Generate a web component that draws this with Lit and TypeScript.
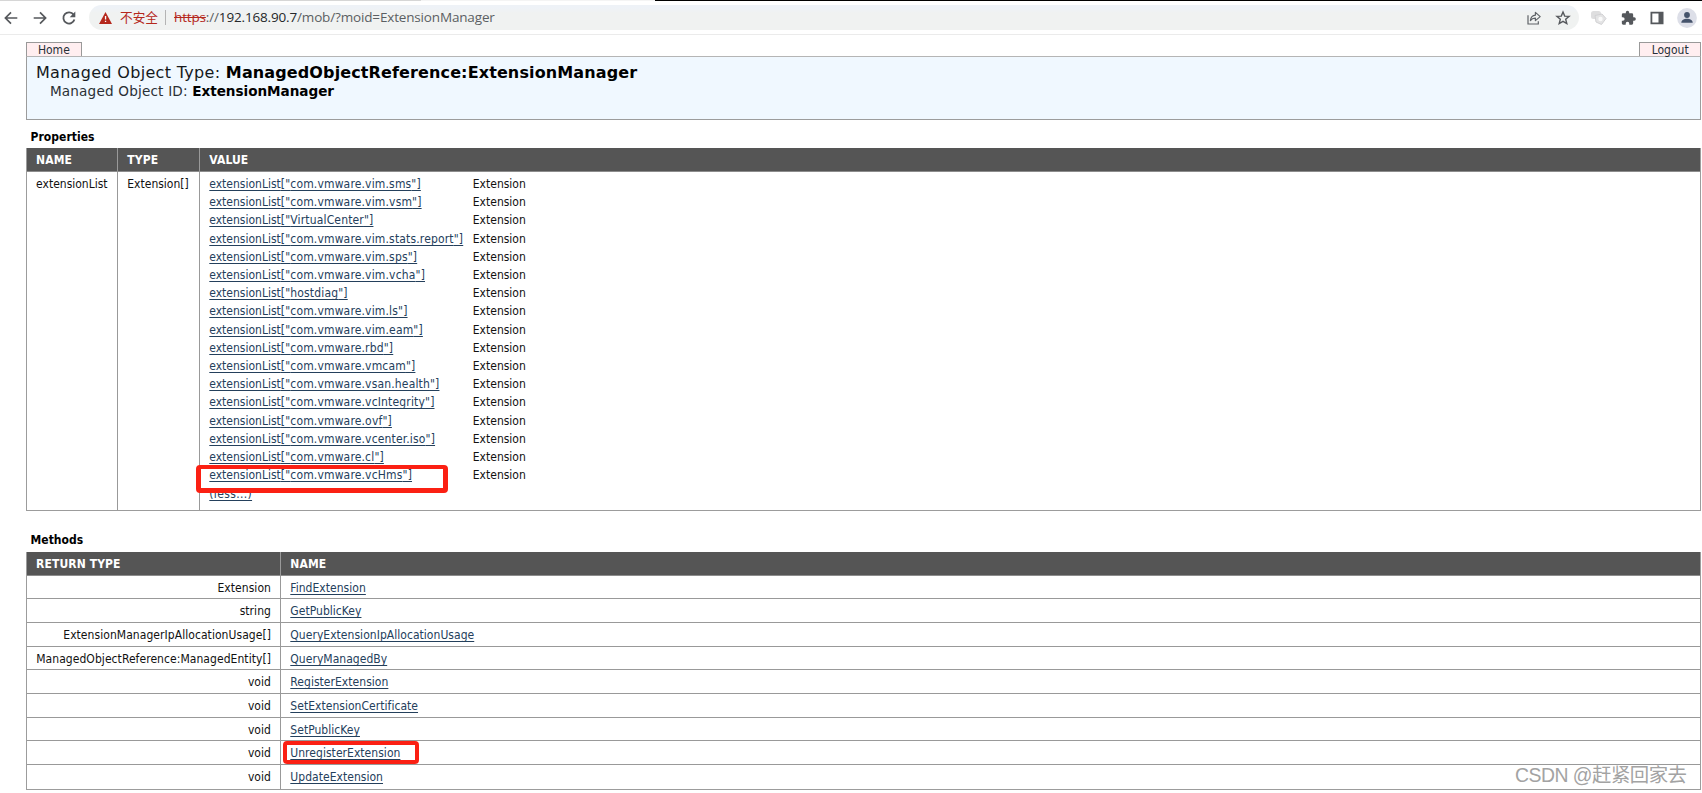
import { LitElement, html, css } from "lit";
import { customElement } from "lit/decorators.js";

const EXTENSIONS = [
  "com.vmware.vim.sms",
  "com.vmware.vim.vsm",
  "VirtualCenter",
  "com.vmware.vim.stats.report",
  "com.vmware.vim.sps",
  "com.vmware.vim.vcha",
  "hostdiag",
  "com.vmware.vim.ls",
  "com.vmware.vim.eam",
  "com.vmware.rbd",
  "com.vmware.vmcam",
  "com.vmware.vsan.health",
  "com.vmware.vcIntegrity",
  "com.vmware.ovf",
  "com.vmware.vcenter.iso",
  "com.vmware.cl",
  "com.vmware.vcHms",
];

const METHODS: [string, string][] = [
  ["Extension", "FindExtension"],
  ["string", "GetPublicKey"],
  ["ExtensionManagerIpAllocationUsage[]", "QueryExtensionIpAllocationUsage"],
  ["ManagedObjectReference:ManagedEntity[]", "QueryManagedBy"],
  ["void", "RegisterExtension"],
  ["void", "SetExtensionCertificate"],
  ["void", "SetPublicKey"],
  ["void", "UnregisterExtension"],
  ["void", "UpdateExtension"],
];

@customElement("browser-bar")
class BrowserBar extends LitElement {
  static styles = css`
    :host { display: block; height: 35px; box-sizing: border-box; background: #fff; border-bottom: 1px solid #ebebeb; }
    .strip { display: flex; height: 1px; }
    .strip-tab { width: 421px; background: #d6d6d6; }
    .strip-gap { width: 234px; background: #f4f4f4; }
    .strip-rest { flex: 1; background: #000; }
    .row { display: flex; align-items: center; height: 25px; margin-top: 4px; }
    svg { display: block; flex: none; }
    .nav { display: flex; align-items: center; gap: 13px; width: 86px; padding-left: 3px; box-sizing: content-box; }
    .omni {
      display: flex; align-items: center; width: 1490px; height: 25px; box-sizing: border-box;
      padding: 0 8px 0 10px; border-radius: 13px; background: linear-gradient(#eef2f7 0 3px, #f0f2f1 8px);
      font: 13.5px/25px "Open Sans", "Noto Sans", sans-serif; color: #5b5f63; white-space: nowrap;
    }
    .warn { font: 12.7px/23px "Noto Sans CJK SC", sans-serif; height: 25px; color: #b5281c; padding-left: 8px; }
    .sep { width: 1px; height: 15px; background: #b4b4b4; margin: 0 8px 0 7px; }
    .url { letter-spacing: -0.16px; }
    .bad { color: #b5281c; text-decoration: line-through; }
    .host { color: #25282b; }
    .acts { display: flex; gap: 13px; margin-left: auto; }
    .ext { display: flex; align-items: center; margin-left: 11px; gap: 13px; }
  `;
  render() {
    return html`
      <div class="strip"><div class="strip-tab"></div><div class="strip-gap"></div><div class="strip-rest"></div></div>
      <div class="row">
        <div class="nav">
          <svg width="16" height="16" viewBox="0 0 16 16" fill="none" stroke="#55585c" stroke-width="1.7"><path d="M14.3 8H3M8 2.4 2.4 8 8 13.6"/></svg>
          <svg width="16" height="16" viewBox="0 0 16 16" fill="none" stroke="#55585c" stroke-width="1.7"><path d="M1.7 8H13M8 2.4 13.6 8 8 13.6"/></svg>
          <svg width="16" height="16" viewBox="0 0 16 16"><path d="M12.6 4.7A5.6 5.6 0 1 0 13.4 9.4" fill="none" stroke="#55585c" stroke-width="1.8"/><path d="M14.3 1.6V7.2H8.7Z" fill="#55585c"/></svg>
        </div>
        <div class="omni">
          <svg width="13" height="12" viewBox="0 0 13 12"><path d="M6.5 0 13 12H0Z" fill="#b5281c"/><path d="M5.9 4h1.3v3.6H5.9zM5.9 8.7h1.3V10H5.9z" fill="#fff"/></svg>
          <span class="warn">不安全</span><span class="sep"></span>
          <span class="url"><span class="bad">https</span>://<span class="host">192.168.90.7</span>/mob/?moid=ExtensionManager</span>
          <div class="acts">
            <svg width="16" height="16" viewBox="0 0 16 16" fill="none" stroke="#5f6368" stroke-width="1.2"><path d="M2 5.3V14H12.3V11.2"/><path d="M4.4 10.6C4.8 7.2 6.7 5.4 9.4 5.2V2.4L14.2 6.6 9.4 10.6V8.1C7.2 8 5.6 8.9 4.4 10.6Z" stroke-linejoin="round"/></svg>
            <svg width="16" height="16" viewBox="0 0 16 16" fill="none" stroke="#55585c" stroke-width="1.4"><path d="M8 2 9.7 6.1 14.1 6.4 10.7 9.3 11.8 13.6 8 11.3 4.2 13.6 5.3 9.3 1.9 6.4 6.3 6.1Z"/></svg>
          </div>
        </div>
        <div class="ext">
          <svg width="17" height="16" viewBox="0 0 17 16"><rect x="1" y="1" width="10" height="8" rx="2.5" fill="#dededf"/><path d="M5 5.5 12 4l4 4.5-4.5 6-5.5-2.5Z" fill="#e4e4e5" stroke="#d2d2d4"/><circle cx="10.5" cy="9" r="2.2" fill="#fafafa"/></svg>
          <svg width="17" height="16" viewBox="0 0 24 24"><path fill="#55585c" d="M20.5 11H19V7a2 2 0 0 0-2-2h-4V3.5a2.5 2.5 0 0 0-5 0V5H4a2 2 0 0 0-2 2v3.8h1.5a2.7 2.7 0 0 1 0 5.4H2V20c0 1.1.9 2 2 2h3.8v-1.5a2.7 2.7 0 0 1 5.4 0V22H17a2 2 0 0 0 2-2v-4h1.5a2.5 2.5 0 0 0 0-5z"/></svg>
          <svg width="14" height="14" viewBox="0 0 14 14"><path fill="#55585c" fill-rule="evenodd" d="M.5.8h13v12.4H.5zM2.3 2.6v8.8h6.2V2.6z"/></svg>
          <svg width="20" height="20" viewBox="0 0 20 20"><circle cx="10" cy="10" r="9.9" fill="#dddfe8"/><circle cx="10" cy="7" r="2.9" fill="#45536b"/><path d="M4.3 14.8c0-2.7 3-4 5.7-4s5.7 1.3 5.7 4z" fill="#45536b"/></svg>
        </div>
      </div>`;
  }
}

@customElement("app-root")
class AppRoot extends LitElement {
  static styles = css`
    :host {
      display: block; position: relative; height: 793px; overflow: hidden; background: #fff; color: #111;
      font: 12px/18.2px "DejaVu Sans Condensed", "DejaVu Sans", sans-serif; font-stretch: condensed;
    }
    .page { padding: 7px 1px 0 25.5px; }
    .tabs { display: flex; justify-content: space-between; height: 14px; }
    .tab {
      box-sizing: border-box; height: 14px; border: 1px solid #999; border-bottom: 0; background: #ffeef0;
      line-height: 15px; padding: 0 11.4px; color: #263038;
    }
    .panel {
      box-sizing: border-box; height: 64px; border: 1px solid #9c9c9c; border-top-color: #b5b5b5; background: #f0f8ff; padding: 5px 0 0 9.4px;
      font-family: "DejaVu Sans", sans-serif; font-stretch: normal;
    }
    .t1 { font-size: 16px; line-height: 21px; letter-spacing: 0.32px; color: #15191c; }
    .t1 b { letter-spacing: 0.12px; }
    .t2 { font-size: 13.6px; line-height: 16px; padding-left: 14px; letter-spacing: 0.18px; color: #2a3035; }
    .t2 b { letter-spacing: -0.04px; }
    b { color: #000; }
    .cap { font-weight: 700; color: #000; padding-left: 5px; letter-spacing: 0.04px; }
    .cap-p { height: 20px; margin-top: 8px; line-height: 18px; }
    .cap-m { margin-top: 21px; height: 20px; line-height: 17px; }
    .tbl { border: 1px solid #9c9c9c; border-top: 0; box-sizing: border-box; display: grid; }
    .props { grid-template-columns: 90.5px 82px 1fr; }
    .meths { grid-template-columns: 253.5px 1fr; }
    .th {
      box-sizing: border-box; height: 23.67px; background: #555; color: #fff; font-weight: 700; line-height: 24.5px; padding-left: 9.6px;
      border-bottom: 1px solid #8c8c8c; letter-spacing: 0.1px;
    }
    .td { box-sizing: border-box; padding-left: 9.6px; }
    .th + .th, .td.mid { border-left: 1px solid #999; padding-left: 9.3px; }
    .props .td { height: 338.3px; padding-top: 3.2px; }
    .list { display: grid; grid-template-columns: 263.5px 1fr; grid-auto-rows: 18.22px; }
    a { color: #24405c; text-decoration: underline; text-underline-offset: 2px; text-decoration-thickness: 1px; text-decoration-skip-ink: none; }
    .key { letter-spacing: 0.16px; }
    .less { letter-spacing: 0.35px; }
    .td.r { text-align: right; padding: 0 9px 0 0; letter-spacing: 0.06px; }
    .meths .td { height: 23.67px; line-height: 24.6px; border-bottom: 1px solid #999; }
    .meths .td.last { border-bottom: 0; }
    .meths a { letter-spacing: 0.04px; }
    .mark { position: absolute; box-sizing: border-box; border: 4px solid #fb2013; border-radius: 4px; }
    .mark-a { left: 196px; top: 465px; width: 252px; height: 28px; border-width: 4px 5px 5px; }
    .mark-b { left: 283px; top: 741px; width: 136px; height: 23px; }
    .wm {
      position: absolute; left: 1515px; top: 761px; font: 19.4px/28px "Liberation Sans", "Noto Sans CJK SC", sans-serif; color: #a3a3a3;
      letter-spacing: -0.5px; white-space: nowrap; text-shadow: 0 0 1px #fff, 1px 1px 0 #fff;
    }
  `;
  render() {
    return html`
      <browser-bar></browser-bar>
      <div class="page">
        <div class="tabs"><div class="tab">Home</div><div class="tab">Logout</div></div>
        <div class="panel">
          <div class="t1">Managed Object Type: <b>ManagedObjectReference:ExtensionManager</b></div>
          <div class="t2">Managed Object ID: <b>ExtensionManager</b></div>
        </div>
        <div class="cap cap-p">Properties</div>
        <div class="tbl props">
          <div class="th">NAME</div><div class="th">TYPE</div><div class="th">VALUE</div>
          <div class="td">extensionList</div>
          <div class="td mid">Extension[]</div>
          <div class="td mid">
            <div class="list">
              ${EXTENSIONS.map((k) => html`<div><a>extensionList<span class="key">["${k}"]</span></a></div><div>Extension</div>`)}
              <div><a class="less">(less...)</a></div>
            </div>
          </div>
        </div>
        <div class="cap cap-m">Methods</div>
        <div class="tbl meths">
          <div class="th">RETURN TYPE</div><div class="th">NAME</div>
          ${METHODS.map(([t, n], i) => {
            const last = i === METHODS.length - 1 ? "last" : "";
            return html`<div class="td r ${last}">${t}</div><div class="td mid ${last}"><a>${n}</a></div>`;
          })}
        </div>
      </div>
      <div class="mark mark-a"></div>
      <div class="mark mark-b"></div>
      <div class="wm">CSDN @赶紧回家去</div>`;
  }
}
